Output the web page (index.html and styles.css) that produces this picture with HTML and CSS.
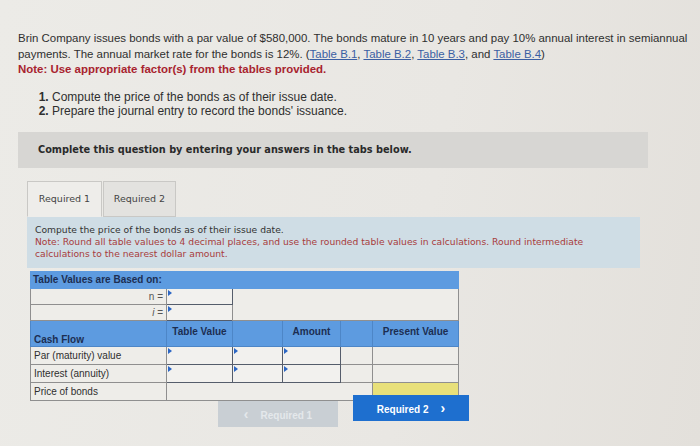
FILE: index.html
```
<!DOCTYPE html>
<html>
<head>
<meta charset="utf-8">
<link rel="stylesheet" href="styles.css">
</head>
<body>
<div class="page">
  <div class="intro">
    <div class="line">Brin Company issues bonds with a par value of $580,000. The bonds mature in 10 years and pay 10% annual interest in semiannual</div>
    <div class="line"><span>payments. The annual market rate for the bonds is 12%. (</span><a href="#">Table B.1</a><span>, </span><a href="#">Table B.2</a><span>, </span><a href="#">Table B.3</a><span>, and </span><a href="#">Table B.4</a><span>)</span></div>
    <div class="line note">Note: Use appropriate factor(s) from the tables provided.</div>
  </div>
  <ol class="tasks">
    <li>Compute the price of the bonds as of their issue date.</li>
    <li>Prepare the journal entry to record the bonds' issuance.</li>
  </ol>
  <div class="instr">Complete this question by entering your answers in the tabs below.</div>
  <div class="tabs">
    <div class="tab active">Required 1</div>
    <div class="tab">Required 2</div>
  </div>
  <div class="panel">
    <div>Compute the price of the bonds as of their issue date.</div>
    <div class="pnote">Note: Round all table values to 4 decimal places, and use the rounded table values in calculations. Round intermediate calculations to the nearest dollar amount.</div>
  </div>
  <table class="grid">
    <colgroup>
      <col class="c1"><col class="c2"><col class="c3"><col class="c4"><col class="c5"><col class="c6">
    </colgroup>
    <tr class="hdr"><th colspan="6">Table Values are Based on:</th></tr>
    <tr class="nrow"><td class="lbl">n =</td><td class="inp"><span class="mark"></span></td><td colspan="4" rowspan="2" class="blank"></td></tr>
    <tr class="nrow"><td class="lbl"><i>i</i> =</td><td class="inp"><span class="mark"></span></td></tr>
    <tr class="hdr2"><th class="bottom">Cash Flow</th><th>Table Value</th><th></th><th>Amount</th><th></th><th>Present Value</th></tr>
    <tr class="drow"><td>Par (maturity) value</td><td class="inp"><span class="mark"></span></td><td class="inp"><span class="mark"></span></td><td class="inp"><span class="mark"></span></td><td></td><td></td></tr>
    <tr class="drow"><td>Interest (annuity)</td><td class="inp"><span class="mark"></span></td><td class="inp"><span class="mark"></span></td><td class="inp"><span class="mark"></span></td><td></td><td></td></tr>
    <tr class="drow"><td>Price of bonds</td><td colspan="4" class="noborder"></td><td class="yellow"></td></tr>
  </table>
  <div class="nav">
    <div class="btn prev"><span class="chev">&lsaquo;</span>Required 1</div>
    <div class="btn next">Required 2<span class="chev after">&rsaquo;</span></div>
  </div>
</div>
</body>
</html>
```
FILE: styles.css
```
html, body {
  margin: 0;
  padding: 0;
}
body {
  background: linear-gradient(100deg, #ecebe7 0%, #e9e7e3 60%, #e3e0db 100%);
  width: 700px;
  height: 446px;
  overflow: hidden;
  font-family: "Liberation Sans", Arial, sans-serif;
  color: #2f2f2f;
}
.page {
  padding: 31px 0 0 18px;
}
.intro {
  font-size: 11.45px;
  line-height: 15.5px;
}
.line {
  white-space: nowrap;
}
.intro a {
  color: #3b5fa3;
  text-decoration: underline;
}
.note {
  color: #a8232f;
  font-weight: bold;
}
.tasks {
  margin: 12px 0 0 0;
  padding-left: 34px;
  font-size: 12px;
  line-height: 14px;
}
.tasks li::marker {
  font-weight: bold;
}
.instr {
  margin-top: 14px;
  width: 610px;
  height: 36px;
  padding-left: 20px;
  background: #d7d6d3;
  font-family: "DejaVu Sans", Verdana, sans-serif;
  font-weight: bold;
  font-size: 9.75px;
  line-height: 36px;
  color: #2a2a2a;
}
.tabs {
  display: flex;
  margin: 13px 0 0 9px;
}
.tab {
  font-family: "DejaVu Sans", Verdana, sans-serif;
  font-size: 9.5px;
  color: #444;
  border: 1px solid #c9c8c5;
  background: #e3e2df;
  height: 34px;
  line-height: 34px;
  width: 71px;
  text-align: center;
  margin-right: 1px;
}
.tab.active {
  background: #eeedea;
  border-bottom-color: #eeedea;
  width: 73px;
}
.panel {
  margin-left: 9px;
  width: 605px;
  background: #cfdde5;
  padding: 7px 0 8px 8px;
  font-family: "DejaVu Sans", Verdana, sans-serif;
  font-size: 9.2px;
  line-height: 12px;
  color: #333;
}
.pnote {
  color: #a83c3c;
}
.grid {
  margin: 3px 0 0 12px;
  border-collapse: collapse;
  table-layout: fixed;
  width: 428px;
  font-family: "Liberation Sans", Arial, sans-serif;
  font-size: 10px;
}
.c1 { width: 136px; }
.c2 { width: 66px; }
.c3 { width: 50px; }
.c4 { width: 58px; }
.c5 { width: 32px; }
.c6 { width: 86px; }
.grid td, .grid th {
  border: 1px solid #8f8f8f;
  padding: 0 3px;
}
.hdr th {
  background: #5d9be0;
  color: #1c2e52;
  height: 16px;
  font-weight: bold;
  text-align: left;
  border-color: #5d9be0;
  padding-left: 2px;
}
.nrow td {
  height: 15px;
  background: #eeede9;
}
.lbl {
  text-align: right;
  color: #555;
}
.grid td.blank {
  background: #eeede9;
}
.hdr2 th {
  background: #5d9be0;
  color: #1c2e52;
  height: 21px;
  font-weight: bold;
  text-align: center;
  border-color: #4d86c7;
  vertical-align: middle;
  padding-bottom: 4px;
}
.hdr2 th.bottom {
  vertical-align: bottom;
  padding-bottom: 1px;
  text-align: left;
}
.drow td {
  height: 17px;
  background: #eeede9;
  color: #2f2f2f;
}
.grid td.inp {
  position: relative;
  border: 1.5px solid #555d6b;
  background: #f2f1ee;
}
.mark {
  position: absolute;
  left: 1px;
  top: 1px;
  width: 0;
  height: 0;
  border-top: 3px solid transparent;
  border-bottom: 3px solid transparent;
  border-left: 4px solid #2b66c4;
}
.grid td.noborder {
  border-left: none;
  border-right: 1px solid #8f8f8f;
}
.grid td.yellow {
  background: #e8e07a;
}
.nav {
  display: flex;
  gap: 15px;
  margin: 0 0 0 200px;
}
.btn {
  height: 26px;
  line-height: 26px;
  text-align: center;
  font-family: "Liberation Sans", Arial, sans-serif;
  font-weight: bold;
  font-size: 10px;
  color: #fff;
}
.chev {
  font-size: 14px;
  margin-right: 12px;
}
.chev.after {
  margin-right: 0;
  margin-left: 12px;
}
.prev {
  background: #c9cfd4;
  color: #e4e8eb;
  margin-top: 0;
  width: 120px;
}
.next {
  background: #1e6fcf;
  margin-top: -6px;
  width: 116px;
}
```
